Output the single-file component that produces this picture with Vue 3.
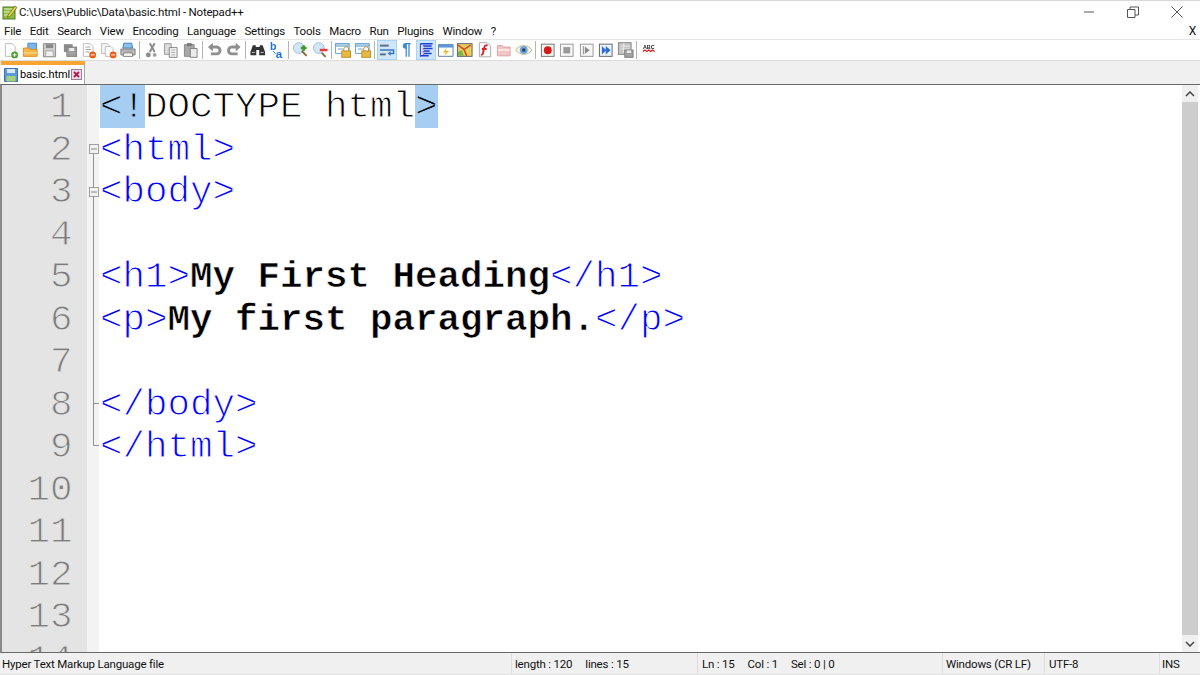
<script setup>
const lineNumbers = Array.from({ length: 14 }, (_, i) => i + 1)
const menus = ['File', 'Edit', 'Search', 'View', 'Encoding', 'Language', 'Settings', 'Tools', 'Macro', 'Run', 'Plugins', 'Window', '?']
</script>

<template>
  <div class="app">
    <header class="titlebar">
      <svg class="logo" viewBox="0 0 16 16" width="16" height="16">
        <rect x="1" y="3" width="12" height="12" fill="#8fbf3f" stroke="#4d7a1f" />
        <path d="M2 5h10M2 8h8M2 11h7" stroke="#e4f2c4" />
        <path d="M6 11 13 2l2 1.500-7 9-2.500 1z" fill="#e8d44a" stroke="#5e5a20" stroke-width=".7" />
      </svg>
      <span class="title">C:\Users\Public\Data\basic.html - Notepad++</span>
      <div class="winctl">
        <svg viewBox="0 0 12 12" width="12" height="12"><path d="M1 6h10" stroke="#555" /></svg>
        <svg viewBox="0 0 12 12" width="12" height="12"><path d="M.5 3.500h7.500v8h-7.500zM3 3.500V1h8.500v8H8" fill="none" stroke="#555" /></svg>
        <svg viewBox="0 0 12 12" width="12" height="12"><path d="M.5 .5l11 11M11.500 .5l-11 11" stroke="#555" /></svg>
      </div>
    </header>

    <nav class="menubar">
      <span v-for="m in menus" :key="m" class="menu">{{ m }}</span>
      <span class="menu-x">X</span>
    </nav>

    <div class="toolbar">
      <div class="icons">
        <!-- new -->
        <svg viewBox="0 0 20 20"><path d="M4.500 3.500h7l3 3v10h-10z" fill="#fff" stroke="#bbb" /><circle cx="14" cy="15" r="3.500" fill="#4aa02c" /><path d="M12 15h4M14 13v4" stroke="#fff" /></svg>
        <!-- open -->
        <svg viewBox="0 0 20 20"><path d="M7 3h9v9H7z" fill="#7db4e8" stroke="#4f8ccc" /><path d="M2.500 8h6l1 1.500h7v7h-14z" fill="#f6b84a" stroke="#d98f1d" /><path d="M2.500 13h14" stroke="#fde09a" /></svg>
        <!-- save -->
        <svg viewBox="0 0 20 20"><path d="M3.500 3.500h12.500v13.500H3.500z" fill="#cfcfcf" stroke="#8a8a8a" /><rect x="6" y="4" width="7.500" height="4" fill="#8a8a8a" /><rect x="6" y="11" width="7.500" height="5.500" fill="#f1f1f1" stroke="#8a8a8a" stroke-width=".6" /></svg>
        <!-- save all -->
        <svg viewBox="0 0 20 20"><rect x="4" y="4" width="9" height="8" fill="#8c8c8c" /><rect x="7" y="7" width="10" height="9.500" fill="#a0a0a0" stroke="#7f7f7f" /><rect x="9.500" y="8" width="5" height="3" fill="#eee" /></svg>
        <!-- close -->
        <svg viewBox="0 0 20 20"><path d="M4.500 3.500h7l3 3v10h-10z" fill="#fff" stroke="#bbb" /><path d="M6.500 7h5M6.500 9.500h6M6.500 12h4" stroke="#aaa" /><circle cx="14" cy="15" r="3.500" fill="#e8601c" /><path d="M12 15h4" stroke="#fff" /></svg>
        <!-- close all -->
        <svg viewBox="0 0 20 20"><path d="M2.500 3.500h6l2 2v8h-8z" fill="#f4f4f4" stroke="#bbb" /><path d="M6.500 6.500h6l2 2v8h-8z" fill="#fff" stroke="#bbb" /><circle cx="14.500" cy="15" r="3.500" fill="#e8601c" /><path d="M12.500 15h4" stroke="#fff" /></svg>
        <!-- print -->
        <svg viewBox="0 0 20 20"><path d="M6 3h8l1 5H5z" fill="#8fc0ea" stroke="#3f7fc0" /><path d="M3 9h14.500v6H3z" fill="#c9c9c9" stroke="#777" /><path d="M5.500 13h9.500v3.500H5.500z" fill="#fff" stroke="#777" /><path d="M4 11h12" stroke="#999" /></svg>
        <i class="sep"></i>
        <!-- cut -->
        <svg viewBox="0 0 20 20"><path d="M13 3 8 12M8 3l5 9" stroke="#8c8c8c" stroke-width="2" /><circle cx="6.500" cy="15" r="2.500" fill="#8b8b8b" /><circle cx="13" cy="15" r="2" fill="#a0a0a0" /></svg>
        <!-- copy -->
        <svg viewBox="0 0 20 20"><path d="M3.500 3.500h7v11h-7z" fill="#ddd" stroke="#999" /><path d="M8.500 7.500h8v10h-8z" fill="#f3f3f3" stroke="#888" /><path d="M10.500 10h4M10.500 12.500h4M10.500 15h4" stroke="#aaa" /></svg>
        <!-- paste -->
        <svg viewBox="0 0 20 20"><path d="M3.500 4.500h10v12h-10z" fill="#a8a8a8" stroke="#888" /><rect x="6" y="3" width="5" height="3" fill="#777" /><path d="M9.500 8.500h7v9h-7z" fill="#ececec" stroke="#808080" /></svg>
        <i class="sep"></i>
        <!-- undo -->
        <svg viewBox="0 0 20 20"><path d="M6 7h6c4.500 0 4.500 7 0 7H6" fill="none" stroke="#8f8f8f" stroke-width="3" /><path d="M8 2.500v9L3 7z" fill="#8f8f8f" /></svg>
        <!-- redo -->
        <svg viewBox="0 0 20 20"><path d="M14 7H8c-4.500 0-4.500 7 0 7h6" fill="none" stroke="#8f8f8f" stroke-width="3" /><path d="M12 2.500v9L17 7z" fill="#8f8f8f" /></svg>
        <i class="sep"></i>
        <!-- find -->
        <svg viewBox="0 0 20 20"><path d="M5 5h3v2h4V5h3l2.500 7v3.500h-6V10H8.500v5.500h-6V12z" fill="#333" /><path d="M4 12.500h3M13 12.500h3" stroke="#ccc" /></svg>
        <!-- replace -->
        <svg viewBox="0 0 20 20"><text x="3" y="10" class="glyph-b">b</text><text x="9" y="18" class="glyph-a">a</text><path d="M6 11l3 3" stroke="#1c74d8" /></svg>
        <i class="sep"></i>
        <!-- zoom in -->
        <svg viewBox="0 0 20 20"><circle cx="8" cy="8" r="5.500" fill="#d3e6f6" stroke="#9cc0dc" /><path d="M11 11l5 5" stroke="#8a6b3c" stroke-width="2" /><path d="M10 8h6M13 5v6" stroke="#3f9a2e" stroke-width="2.500" /></svg>
        <!-- zoom out -->
        <svg viewBox="0 0 20 20"><circle cx="8" cy="8" r="5.500" fill="#d3e6f6" stroke="#9cc0dc" /><path d="M11 13l4 4" stroke="#8a6b3c" stroke-width="2" /><path d="M9 10h8" stroke="#e43a3a" stroke-width="2.500" /></svg>
        <i class="sep"></i>
        <!-- sync v -->
        <svg viewBox="0 0 20 20"><path d="M1.500 3.500h14v10h-14z" fill="#fff" stroke="#6ba2d4" /><path d="M1.500 3.500h14v2.500h-14zM4 9h5" fill="#bcd8f0" stroke="#6ba2d4" /><path d="M10 11V9c0-3 5-3 5 0v2" fill="none" stroke="#b8902e" /><rect x="8" y="11" width="9" height="6.500" fill="#eab83e" stroke="#b8902e" /></svg>
        <!-- sync h -->
        <svg viewBox="0 0 20 20"><path d="M1.500 3.500h14v10h-14z" fill="#fff" stroke="#6ba2d4" /><path d="M1.500 3.500h14v2.500h-14zM4 9h5" fill="#bcd8f0" stroke="#6ba2d4" /><path d="M10 11V9c0-3 5-3 5 0v2" fill="none" stroke="#b8902e" /><rect x="8" y="11" width="9" height="6.500" fill="#eab83e" stroke="#b8902e" /></svg>
        <i class="sep"></i>
        <!-- wrap -->
        <span class="active">
          <svg viewBox="0 0 20 20"><path d="M3 5.500h9" stroke="#5a6f86" stroke-width="2" /><path d="M3 10h14v3.500h-4" fill="none" stroke="#3a78b8" stroke-width="1.500" /><path d="M3 14.500h6" stroke="#5a6f86" stroke-width="2" /><path d="M14 11v5l-3-2.500z" fill="#3a78b8" /></svg>
        </span>
        <!-- pilcrow -->
        <span class="pilcrow">¶</span>
        <!-- indent guide -->
        <span class="active">
          <svg viewBox="0 0 20 20"><path d="M5 3.500h12M8 6h8M8 8.500h9M8 11h6M8 13.500h8M5 16h8" stroke="#1a3fd6" stroke-width="1.500" /><path d="M4.500 3v14" stroke="#1a3fd6" /><path d="M7.500 5v10" stroke="#e02020" stroke-dasharray="1.500 1.500" /></svg>
        </span>
        <!-- doc panel -->
        <svg viewBox="0 0 20 20"><path d="M2.500 4.500h15v12h-15z" fill="#fdfdf3" stroke="#5d7fa6" /><path d="M2.500 4.500h15v3h-15z" fill="#5d97d8" /><path d="M11 8 7 12.500h3L8.500 16l5-5H10z" fill="#f3b530" /></svg>
        <!-- map -->
        <svg viewBox="0 0 20 20"><rect x="2.500" y="3.500" width="15" height="13" fill="#e6d25a" stroke="#5d6470" /><path d="M3 5 9 9l3 7M16 5l-6 4" stroke="#d8442e" stroke-width="1.500" fill="none" /><path d="M3 12l4-2 2 6H3z" fill="#78b84a" /></svg>
        <!-- function list -->
        <svg viewBox="0 0 20 20"><path d="M4.500 2.500h8l3.500 3.500v11H4.500z" fill="#fff" stroke="#aaa" /><path d="M6 15c3 0 2-2 3-6s2-4 4-4M7 9h5" fill="none" stroke="#d8242a" stroke-width="2" /></svg>
        <!-- folder -->
        <svg viewBox="0 0 20 20"><path d="M3.500 5.500h5l1 1.500h7v9h-13z" fill="#f3c6c6" stroke="#dca0a0" /><path d="M4 10h12" stroke="#fbe4e4" stroke-width="2" /></svg>
        <!-- eye -->
        <svg viewBox="0 0 20 20"><path d="M1.500 10C6 4 14 4 18.500 10 14 16 6 16 1.500 10z" fill="#f3f1e4" stroke="#c9b98e" /><circle cx="10" cy="10" r="4" fill="#6aa4d8" /><circle cx="10" cy="10" r="1.800" fill="#26425e" /></svg>
        <i class="sep"></i>
        <!-- record -->
        <svg viewBox="0 0 20 20"><rect x="3.500" y="4" width="13" height="12.500" fill="#f5f5f5" stroke="#777" /><circle cx="10" cy="10.250" r="4" fill="#d81818" /></svg>
        <!-- stop -->
        <svg viewBox="0 0 20 20"><rect x="3.500" y="4" width="13" height="12.500" fill="#f7f7f7" stroke="#999" /><rect x="6.500" y="7" width="7" height="6.500" fill="#9a9a9a" /></svg>
        <!-- play -->
        <svg viewBox="0 0 20 20"><rect x="3.500" y="4" width="13" height="12.500" fill="#f7f7f7" stroke="#999" /><path d="M8 6.500v7.500l5-3.750z" fill="#8a8a8a" /><path d="M6.500 6v8.500" stroke="#8a8a8a" /></svg>
        <!-- play multiple -->
        <svg viewBox="0 0 20 20"><rect x="3.500" y="4" width="13" height="12.500" fill="#eef4fb" stroke="#666" /><path d="M6 6v8.500l4.500-4.250zM10 6v8.500l5-4.250z" fill="#2b6ed8" /></svg>
        <!-- save macro -->
        <svg viewBox="0 0 20 20"><rect x="2.500" y="2.500" width="13" height="12" fill="#c4c4c4" stroke="#888" /><path d="M5 6h9M5 9h9M8 3v10" stroke="#eee" /><rect x="9" y="10" width="8.500" height="7.500" fill="#a0a0a0" stroke="#808080" /><rect x="11" y="10.500" width="4.500" height="2.500" fill="#eee" /></svg>
        <i class="sep"></i>
        <!-- spell -->
        <svg viewBox="0 0 20 20"><text x="10" y="8.500" class="glyph-abc">ABC</text><path d="M4 11.500l2-1.500 2 1.500 2-1.500 2 1.500 2-1.500 2 1.500" fill="none" stroke="#e01818" stroke-width="1.300" /></svg>
      </div>
    </div>

    <div class="tabbar">
      <div class="tab">
        <svg viewBox="0 0 14 14" width="14" height="14"><path d="M.5 .5h13v13h-13z" fill="#5d9bd8" stroke="#3f6fa8" /><rect x="3" y="1" width="8" height="4" fill="#d8e8f6" /><rect x="2.500" y="8" width="9" height="5.500" fill="#a5d27a" /></svg>
        <span class="tab-label">basic.html</span>
        <svg viewBox="0 0 11 11" width="11" height="11"><rect x=".5" y=".5" width="10" height="10" fill="#e8dbe2" stroke="#9a7d92" /><path d="M3 3l5 5M8 3l-5 5" stroke="#b01a4a" stroke-width="1.800" /></svg>
      </div>
    </div>

    <main class="editor">
      <div class="gutter">
        <div v-for="n in lineNumbers" :key="n" class="num">{{ n }}</div>
      </div>
      <div class="fold">
        <svg viewBox="0 0 12 567" width="12" height="567">
          <path d="M6.500 69V360.500H12.500M6.500 318.500H12.500" fill="none" stroke="#909090" />
          <g fill="#f1f1f1" stroke="#a0a0a0">
            <rect x="2.500" y="59.500" width="9" height="9" />
            <rect x="2.500" y="102.500" width="9" height="9" />
          </g>
          <path d="M4 64h6M4 107h6" stroke="#888" />
        </svg>
      </div>
      <div class="code">
        <div class="line plain"><span class="sel">&lt;!</span>DOCTYPE html<span class="sel">&gt;</span></div>
        <div class="line tag">&lt;html&gt;</div>
        <div class="line tag">&lt;body&gt;</div>
        <div class="line"></div>
        <div class="line tag">&lt;h1&gt;<b>My First Heading</b>&lt;/h1&gt;</div>
        <div class="line tag">&lt;p&gt;<b>My first paragraph.</b>&lt;/p&gt;</div>
        <div class="line"></div>
        <div class="line tag">&lt;/body&gt;</div>
        <div class="line tag">&lt;/html&gt;</div>
      </div>
      <div class="scrollbar">
        <div class="arrow">
          <svg viewBox="0 0 10 6" width="10" height="6"><path d="M1 5l4-4 4 4" fill="none" stroke="#444" stroke-width="1.500" /></svg>
        </div>
        <div class="track"><div class="thumb"></div></div>
        <div class="arrow">
          <svg viewBox="0 0 10 6" width="10" height="6"><path d="M1 1l4 4 4-4" fill="none" stroke="#444" stroke-width="1.500" /></svg>
        </div>
      </div>
    </main>

    <footer class="status">
      <div class="cell c-type">Hyper Text Markup Language file</div>
      <div class="cell c-len"><span>length : 120</span><span>lines : 15</span></div>
      <div class="cell c-pos"><span>Ln : 15</span><span>Col : 1</span><span>Sel : 0 | 0</span></div>
      <div class="cell c-eol">Windows (CR LF)</div>
      <div class="cell c-enc">UTF-8</div>
      <div class="cell c-ins">INS</div>
    </footer>
  </div>
</template>

<style scoped>
.app {
  width: 1200px;
  height: 675px;
  display: flex;
  flex-direction: column;
  overflow: hidden;
  background: #fff;
  font-family: Roboto, "Open Sans", sans-serif;
  color: #111;
}
.titlebar {
  height: 22px;
  flex: none;
  display: flex;
  align-items: center;
  padding-left: 2px;
  border-top: 1px solid #d8d8d8;
  box-sizing: border-box;
}
.logo { margin-right: 1px; }
.title { font-size: 11.500px; letter-spacing: -.2px; }
.winctl {
  margin-left: auto;
  display: flex;
  gap: 32px;
  padding-right: 17px;
}
.menubar {
  height: 18px;
  flex: none;
  display: flex;
  align-items: center;
  padding-left: 4px;
  gap: 8.600px;
  font-size: 11.500px;
  letter-spacing: -.2px;
  border-bottom: 1px solid #e6e6e6;
  box-sizing: border-box;
}
.menu-x { margin-left: auto; margin-right: 4px; font-size: 12px; }
.toolbar {
  height: 21px;
  flex: none;
  background: #fff;
  border-bottom: 1px solid #dcdcdc;
  box-sizing: border-box;
}
.icons {
  display: flex;
  align-items: center;
  height: 20px;
  padding-left: 1.250px;
  filter: blur(.35px);
}
.icons svg { width: 19.500px; height: 20px; flex: none; display: block; }
.sep {
  width: 1px;
  height: 18px;
  margin: 0 2px 0 1.200px;
  background: #b5b5b5;
  flex: none;
}
.active {
  width: 19.500px;
  height: 20px;
  flex: none;
  background: #cfe6f9;
  box-shadow: inset 0 0 0 1px #a9d2f3;
}
.pilcrow {
  width: 19.500px;
  flex: none;
  text-align: center;
  color: #3a8ad0;
  font: bold 16px/20px "Liberation Sans", sans-serif;
}
.glyph-b { font: bold 11px "Liberation Sans", sans-serif; fill: #1c74d8; }
.glyph-a { font: bold 12px "Liberation Sans", sans-serif; fill: #1c74d8; }
.glyph-abc { font: bold 5.500px "Liberation Sans", sans-serif; fill: #222; text-anchor: middle; }
.tabbar {
  height: 23px;
  flex: none;
  background: #f0f0f0;
  display: flex;
  padding-left: 1px;
  box-sizing: border-box;
}
.tab {
  width: 84px;
  height: 23px;
  box-sizing: border-box;
  background: #fff;
  border-top: 4px solid #faa532;
  border-right: 1px solid #a8a8a8;
  display: flex;
  align-items: center;
  padding-left: 3px;
  gap: 2px;
}
.tab-label {
  width: 49px;
  font: 11px Roboto, sans-serif;
  letter-spacing: -.1px;
  color: #000;
}
.editor {
  flex: 1;
  min-height: 0;
  display: flex;
  overflow: hidden;
  border-top: 1px solid #696969;
  border-left: 2px solid #8a8a8a;
  border-bottom: 1px solid #696969;
  font-family: "Liberation Mono", monospace;
  font-size: 37.500px;
}
.gutter {
  width: 85px;
  flex: none;
  background: #e4e4e4;
  color: #7c7c7c;
  text-align: right;
  padding-right: 14.500px;
  box-sizing: border-box;
  -webkit-text-stroke: 1px #e4e4e4;
}
.num { height: 42.500px; line-height: 44.500px; }
.fold {
  width: 12px;
  flex: none;
  background: #f3f3f3;
  overflow: hidden;
}
.fold svg { display: block; }
.code {
  flex: 1;
  min-width: 0;
  padding-left: 1px;
  -webkit-text-stroke: 1px #fff;
}
.line { height: 42.500px; line-height: 44.500px; white-space: pre; }
.plain { color: #000; }
.tag { color: #0000ff; }
.tag b {
  color: #000;
  font-weight: 700;
  -webkit-text-stroke: .6px #fff;
}
.sel {
  background: #a6cdf2;
  display: inline-block;
  height: 42.500px;
  -webkit-text-stroke: 1px #a6cdf2;
}
.scrollbar {
  width: 16px;
  flex: none;
  margin-right: 2px;
  background: #f0f0f0;
  display: flex;
  flex-direction: column;
}
.arrow {
  height: 17px;
  flex: none;
  display: flex;
  align-items: center;
  justify-content: center;
}
.track { flex: 1; }
.thumb { height: 100%; background: #cdcdcd; }
.status {
  height: 22px;
  flex: none;
  background: #f0f0f0;
  display: flex;
  font: 11.500px/23px Roboto, sans-serif;
  letter-spacing: -.2px;
  border-bottom: 1px solid #e0e0e0;
  box-sizing: border-box;
}
.cell {
  box-sizing: border-box;
  white-space: nowrap;
  padding-left: 2px;
  border-right: 1px solid #dcdcdc;
  display: flex;
}
.c-type { width: 512px; padding-left: 2px; }
.c-len { width: 186px; padding-left: 3px; gap: 13px; }
.c-pos { width: 245px; padding-left: 4px; gap: 13px; }
.c-eol { width: 102px; padding-left: 3px; }
.c-enc { width: 115px; padding-left: 4px; }
.c-ins { flex: 1; border-right: 0; padding-left: 2px; }
</style>
